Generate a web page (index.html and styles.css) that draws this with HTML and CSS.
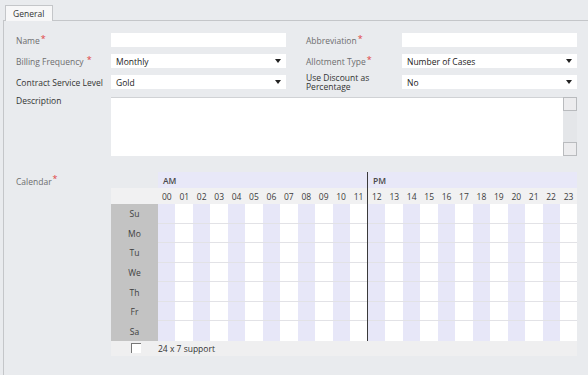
FILE: index.html
```html
<!DOCTYPE html>
<html lang="en">
<head>
  <meta charset="UTF-8" />
  <title>Contract Template</title>
  <link rel="stylesheet" href="styles.css">
</head>
<body>

<div class="tabs">
  <div class="tab">General</div>
</div>

<div class="panel">
  <div class="form-grid">
    <div class="label req">Name<span class="star">*</span></div>
    <div class="field input"></div>
    <div></div>
    <div class="label req">Abbreviation<span class="star">*</span></div>
    <div class="field input"></div>

    <div class="label req">Billing Frequency&nbsp;<span class="star">*</span></div>
    <div class="field select">Monthly</div>
    <div></div>
    <div class="label req">Allotment Type<span class="star">*</span></div>
    <div class="field select">Number of Cases</div>

    <div class="label">Contract Service Level</div>
    <div class="field select">Gold</div>
    <div></div>
    <div class="label two-line">Use Discount as Percentage</div>
    <div class="field select">No</div>
  </div>

  <div class="desc-row">
    <div class="label">Description</div>
    <div class="textarea"></div>
    <div class="scrollbar">
      <div class="scroll-btn"></div>
      <div class="scroll-btn"></div>
    </div>
  </div>

  <div class="cal-row">
    <div class="label req cal-label">Calendar<span class="star">*</span></div>
    <div class="calendar">
      <div class="cal-grid">
        <div class="days">
          <div class="half-head"></div>
          <div class="hours"></div>
          <div class="day">Su</div>
          <div class="day">Mo</div>
          <div class="day">Tu</div>
          <div class="day">We</div>
          <div class="day">Th</div>
          <div class="day">Fr</div>
          <div class="day">Sa</div>
        </div>
        <div class="half">
          <div class="half-head">AM</div>
          <div class="hours">
            <span>00</span><span>01</span><span>02</span><span>03</span><span>04</span><span>05</span>
            <span>06</span><span>07</span><span>08</span><span>09</span><span>10</span><span>11</span>
          </div>
          <div class="slots">
            <div class="slot-row"></div><div class="slot-row"></div><div class="slot-row"></div>
            <div class="slot-row"></div><div class="slot-row"></div><div class="slot-row"></div>
            <div class="slot-row"></div>
          </div>
        </div>
        <div class="half pm">
          <div class="half-head">PM</div>
          <div class="hours">
            <span>12</span><span>13</span><span>14</span><span>15</span><span>16</span><span>17</span>
            <span>18</span><span>19</span><span>20</span><span>21</span><span>22</span><span>23</span>
          </div>
          <div class="slots">
            <div class="slot-row"></div><div class="slot-row"></div><div class="slot-row"></div>
            <div class="slot-row"></div><div class="slot-row"></div><div class="slot-row"></div>
            <div class="slot-row"></div>
          </div>
        </div>
      </div>
      <div class="cal-foot">
        <span class="checkbox"></span>
        <span>24 x 7 support</span>
      </div>
    </div>
  </div>
</div>

</body>
</html>
```

FILE: styles.css
```css
* {
  box-sizing: border-box;
}

body {
  margin: 0;
  background: #e9ebee;
  font-family: 'Open Sans', 'DejaVu Sans', sans-serif;
  font-size: 8.5px;
  color: #333;
  height: 375px;
  overflow: hidden;
}

.tabs {
  padding: 5px 0 0 5px;
  height: 20px;
  display: flex;
}

.tab {
  height: 16px;
  padding: 2px 8px 0 7px;
  background: #f7f7f8;
  border: 1px solid #c4c6c9;
  border-bottom: none;
  color: #333;
  position: relative;
  z-index: 1;
}

.panel {
  margin-left: 3px;
  border-top: 1px solid #c4c6c9;
  border-left: 1px solid #c4c6c9;
  height: 355px;
  padding: 12px 0 0 12px;
}

.form-grid {
  display: grid;
  grid-template-columns: 95px 175px 20px 96px 175px;
  grid-auto-rows: 14px;
  row-gap: 7px;
}

.label {
  display: flex;
  align-items: center;
  color: #333;
  white-space: nowrap;
}

.label.req {
  color: #6e6e6e;
}

.star {
  color: #e0413f;
  margin-left: 1px;
  position: relative;
  top: -2px;
  font-size: 9px;
}

.label.two-line {
  white-space: normal;
  line-height: 9px;
  width: 80px;
}

.field {
  background: #fff;
  display: flex;
  align-items: center;
  padding-left: 5px;
  color: #222;
}

.select {
  position: relative;
}

.select::after {
  content: "";
  position: absolute;
  right: 5px;
  top: 5px;
  border-left: 3px solid transparent;
  border-right: 3px solid transparent;
  border-top: 4px solid #222;
}

.desc-row {
  display: flex;
  margin-top: 8px;
  height: 59px;
}

.desc-row .label {
  width: 95px;
  align-items: flex-start;
  margin-top: -2px;
}

.textarea {
  width: 452px;
  background: #fff;
  border-top: 1px solid #d0d2d5;
}

.scrollbar {
  width: 14px;
  display: flex;
  flex-direction: column;
  justify-content: space-between;
  background: #e4e6e9;
}

.scroll-btn {
  height: 14px;
  border: 1px solid #b9bbbe;
  background: #ececee;
}

.cal-row {
  display: flex;
  margin-top: 16px;
}

.cal-label {
  width: 95px;
  height: 16px;
  align-items: flex-end;
  padding-bottom: 1px;
}

.calendar {
  width: 466px;
}

.cal-grid {
  display: flex;
}

.days {
  width: 47px;
}

.half {
  flex: 1;
}

.half.pm {
  border-left: 1px solid #3a3a3a;
}

.half-head {
  height: 16px;
  padding: 3px 0 0 5px;
  color: #4a4a4a;
  font-weight: 600;
}

.half .half-head {
  background: #e8e8f8;
}

.hours {
  height: 16px;
  display: flex;
  background: #f1f1f2;
  color: #3c3c3c;
}

.hours span {
  flex: 1;
  padding: 3px 0 0 4px;
}

.day {
  height: 19.57px;
  background: #c3c3c3;
  color: #3f3f3f;
  display: flex;
  align-items: center;
  justify-content: center;
}

.slots {
  background: repeating-linear-gradient(90deg, #e7e7f8 0 17.46px, #fff 17.46px 34.92px);
}

.slot-row {
  height: 19.57px;
  border-bottom: 1px solid #e2e2e6;
}

.slot-row:last-child {
  border-bottom: none;
}

.cal-foot {
  height: 15px;
  background: #efeff0;
  display: flex;
  align-items: center;
  color: #333;
}

.checkbox {
  width: 10px;
  height: 10px;
  margin: 0 17px 0 20px;
  border-top: 1px solid #777;
  border-left: 1px solid #777;
  background: #fff;
}
```
